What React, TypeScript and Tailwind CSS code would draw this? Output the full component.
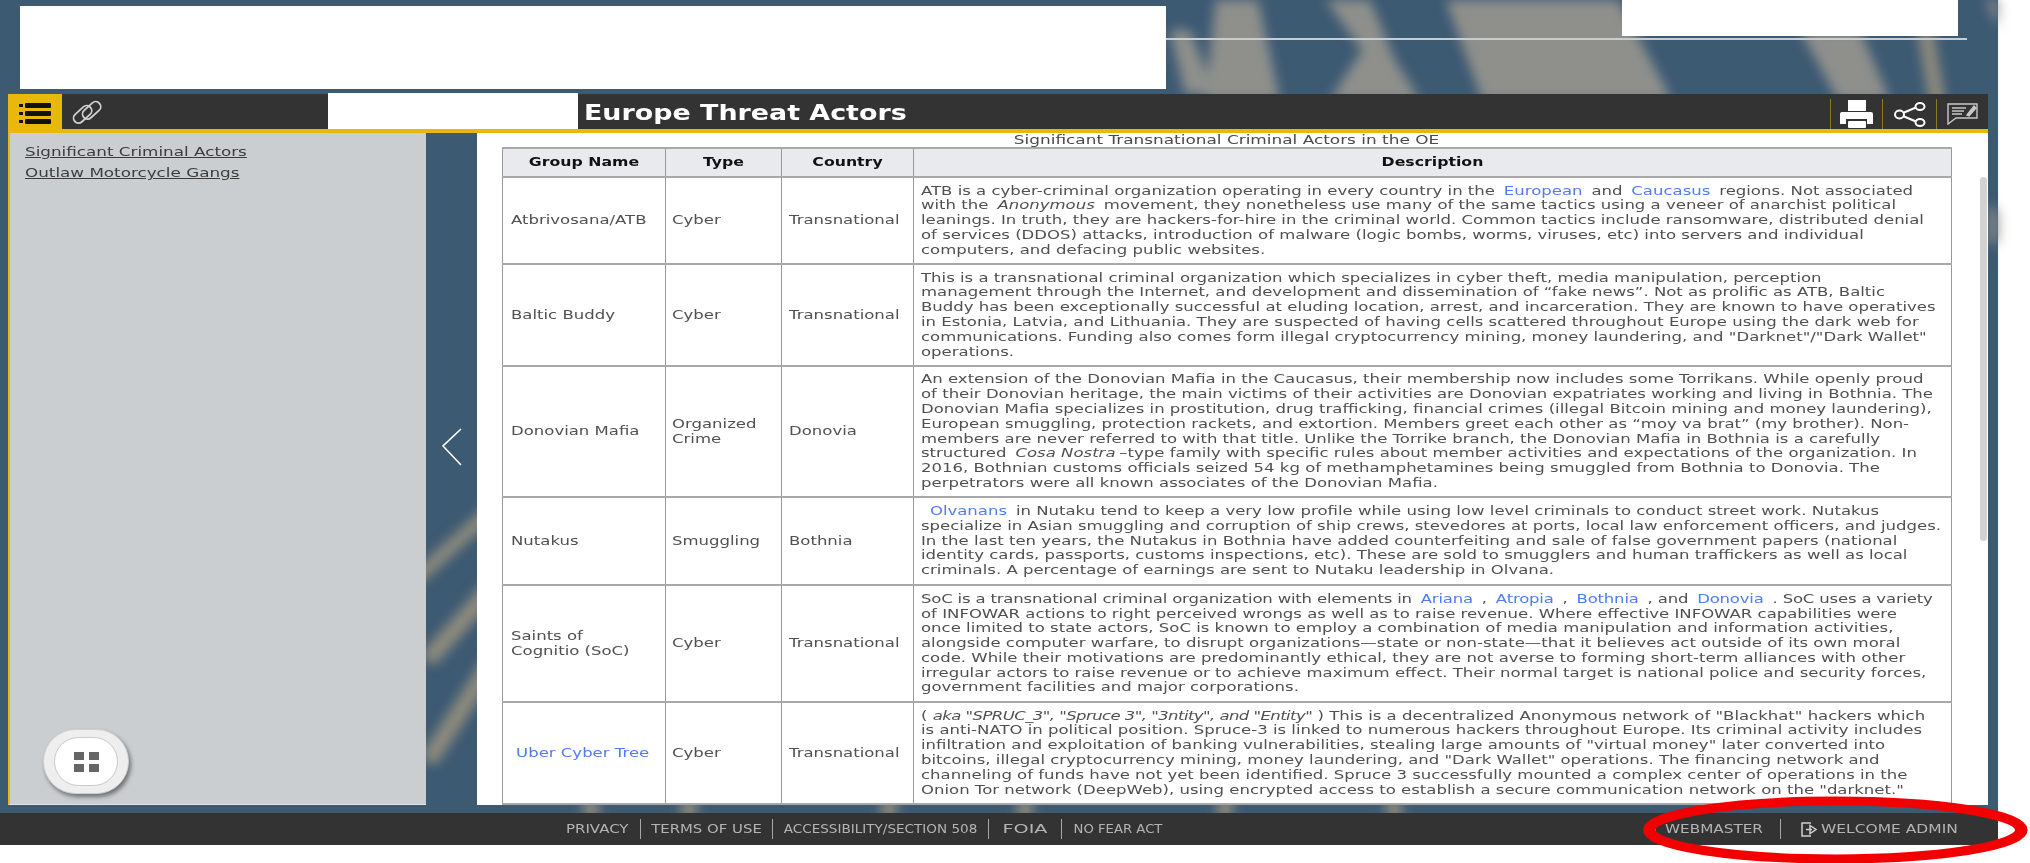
import type { ReactNode } from 'react';

// the capture is stretched sideways, so text gets a horizontal scale
const stretched = 'block whitespace-nowrap origin-left scale-x-[1.27]';

const A = ({ children }: { children: ReactNode }) => (
  <span className="text-[#4f7cf0] mx-[7px]">{children}</span>
);

type Row = {
  name: ReactNode;
  type: ReactNode;
  country: string;
  height: string;
  lines: ReactNode[];
};

const rows: Row[] = [
  {
    name: 'Atbrivosana/ATB',
    type: 'Cyber',
    country: 'Transnational',
    height: 'h-[87px]',
    lines: [
      <>ATB is a cyber-criminal organization operating in every country in the<A>European</A>and<A>Caucasus</A>regions. Not associated</>,
      <>with the <i className="mx-[3px]">Anonymous</i> movement, they nonetheless use many of the same tactics using a veneer of anarchist political</>,
      'leanings. In truth, they are hackers-for-hire in the criminal world. Common tactics include ransomware, distributed denial',
      'of services (DDOS) attacks, introduction of malware (logic bombs, worms, viruses, etc) into servers and individual',
      'computers, and defacing public websites.',
    ],
  },
  {
    name: 'Baltic Buddy',
    type: 'Cyber',
    country: 'Transnational',
    height: 'h-[102px]',
    lines: [
      'This is a transnational criminal organization which specializes in cyber theft, media manipulation, perception',
      'management through the Internet, and development and dissemination of “fake news”. Not as prolific as ATB, Baltic',
      'Buddy has been exceptionally successful at eluding location, arrest, and incarceration. They are known to have operatives',
      'in Estonia, Latvia, and Lithuania. They are suspected of having cells scattered throughout Europe using the dark web for',
      'communications. Funding also comes form illegal cryptocurrency mining, money laundering, and "Darknet"/"Dark Wallet"',
      'operations.',
    ],
  },
  {
    name: 'Donovian Mafia',
    type: <>Organized<br />Crime</>,
    country: 'Donovia',
    height: 'h-[131px]',
    lines: [
      'An extension of the Donovian Mafia in the Caucasus, their membership now includes some Torrikans. While openly proud',
      'of their Donovian heritage, the main victims of their activities are Donovian expatriates working and living in Bothnia. The',
      'Donovian Mafia specializes in prostitution, drug trafficking, financial crimes (illegal Bitcoin mining and money laundering),',
      'European smuggling, protection rackets, and extortion. Members greet each other as “moy va brat” (my brother). Non-',
      'members are never referred to with that title. Unlike the Torrike branch, the Donovian Mafia in Bothnia is a carefully',
      <>structured <i className="mx-[3px]">Cosa Nostra</i>–type family with specific rules about member activities and expectations of the organization. In</>,
      '2016, Bothnian customs officials seized 54 kg of methamphetamines being smuggled from Bothnia to Donovia. The',
      'perpetrators were all known associates of the Donovian Mafia.',
    ],
  },
  {
    name: 'Nutakus',
    type: 'Smuggling',
    country: 'Bothnia',
    height: 'h-[88px]',
    lines: [
      <><A>Olvanans</A>in Nutaku tend to keep a very low profile while using low level criminals to conduct street work. Nutakus</>,
      'specialize in Asian smuggling and corruption of ship crews, stevedores at ports, local law enforcement officers, and judges.',
      'In the last ten years, the Nutakus in Bothnia have added counterfeiting and sale of false government papers (national',
      'identity cards, passports, customs inspections, etc). These are sold to smugglers and human traffickers as well as local',
      'criminals. A percentage of earnings are sent to Nutaku leadership in Olvana.',
    ],
  },
  {
    name: <>Saints of<br />Cognitio (SoC)</>,
    type: 'Cyber',
    country: 'Transnational',
    height: 'h-[117px]',
    lines: [
      <span className="tracking-[-0.15px]">SoC is a transnational criminal organization with elements in<A>Ariana</A>,<A>Atropia</A>,<A>Bothnia</A>, and<A>Donovia</A>. SoC uses a variety</span>,
      'of INFOWAR actions to right perceived wrongs as well as to raise revenue. Where effective INFOWAR capabilities were',
      'once limited to state actors, SoC is known to employ a combination of media manipulation and information activities,',
      'alongside computer warfare, to disrupt organizations—state or non-state—that it believes act outside of its own moral',
      'code. While their motivations are predominantly ethical, they are not averse to forming short-term alliances with other',
      'irregular actors to raise revenue or to achieve maximum effect. Their normal target is national police and security forces,',
      'government facilities and major corporations.',
    ],
  },
  {
    name: <span className="text-[#4f7cf0] ml-[4px]">Uber Cyber Tree</span>,
    type: 'Cyber',
    country: 'Transnational',
    height: 'h-[102px]',
    lines: [
      <>( <i className="tracking-[-0.45px]">aka "SPRUC_3", "Spruce 3", "3ntity", and "Entity"</i> ) This is a decentralized Anonymous network of "Blackhat" hackers which</>,
      'is anti-NATO in political position. Spruce-3 is linked to numerous hackers throughout Europe. Its criminal activity includes',
      'infiltration and exploitation of banking vulnerabilities, stealing large amounts of "virtual money" later converted into',
      'bitcoins, illegal cryptocurrency mining, money laundering, and "Dark Wallet" operations. The financing network and',
      'channeling of funds have not yet been identified. Spruce 3 successfully mounted a complex center of operations in the',
      'Onion Tor network (DeepWeb), using encrypted access to establish a secure communication network on the "darknet."',
    ],
  },
];

function Backdrop() {
  return (
    <svg className="absolute inset-0 blur-[6px]" width="1998" height="845" fill="none">
      <g fill="#8f908c">
        <path d="M1170 30 L1190 30 L1215 94 L1185 94 Z" />
        <path d="M1216 -5 L1257 -5 L1280 100 L1205 100 Z" />
        <path d="M1322 -5 L1368 -5 L1395 60 L1420 100 L1330 100 L1362 50 Z" />
        <path d="M1444 -5 L1515 -5 L1620 100 L1482 100 Z" />
        <path d="M1515 -5 L1616 -5 L1672 100 L1592 100 Z" />
        <path d="M1800 30 L1860 30 L1890 100 L1838 100 Z" />
        <path d="M1984 -5 L1998 -5 L1998 28 Z" />
        <path d="M1989 203 L1998 212 L1998 240 L1989 247 Z" />
      </g>
      <g stroke="#8e8b7d" strokeLinecap="round">
        <path d="M1926 35 L1937 100" strokeWidth="16" />
        <path d="M490 512 L420 575" strokeWidth="14" />
        <path d="M490 590 L432 655" strokeWidth="18" />
        <path d="M490 665 L432 755" strokeWidth="18" />
        <path d="M591 806 L591 812 M689 806 L689 812 M889 806 L889 812 M1025 806 L1025 812 M1225 806 L1225 812 M1394 806 L1394 812" strokeWidth="16" />
      </g>
    </svg>
  );
}

function ListIcon() {
  return (
    <svg width="32" height="22" viewBox="0 0 32 22" fill="#111">
      <rect x="0" y="1" width="4" height="3" />
      <rect x="0" y="9" width="4" height="3" />
      <rect x="0" y="17" width="4" height="3" />
      <rect x="6" y="0" width="26" height="5" rx="1" />
      <rect x="6" y="8" width="26" height="5" rx="1" />
      <rect x="6" y="16" width="26" height="5" rx="1" />
    </svg>
  );
}

function ChainIcon() {
  return (
    <svg width="32" height="26" viewBox="0 0 32 26" fill="none" stroke="#d0d0d0" strokeWidth="1.8">
      <rect x="15" y="1" width="10" height="21" rx="5" transform="rotate(48 20 11)" />
      <rect x="6" y="5" width="10" height="21" rx="5" transform="rotate(48 11 15)" />
    </svg>
  );
}

function PrintIcon() {
  return (
    <svg width="33" height="28" viewBox="0 0 33 28" fill="#fff">
      <rect x="8" y="0" width="18" height="11" />
      <path d="M2 12 H31 Q33 12 33 14 V24 H27 V19 H6 V24 H0 V14 Q0 12 2 12 Z" />
      <rect x="8" y="21" width="18" height="7" rx="1" />
    </svg>
  );
}

function ShareIcon() {
  return (
    <svg width="32" height="25" viewBox="0 0 32 25" fill="none" stroke="#fff" strokeWidth="2">
      <ellipse cx="5.5" cy="12.5" rx="4.5" ry="4" />
      <ellipse cx="26" cy="4.5" rx="4.5" ry="3.5" />
      <ellipse cx="26" cy="20.5" rx="4.5" ry="3.5" />
      <path d="M10 10.5 L22 5.5 M10 14.5 L22 19.5" />
    </svg>
  );
}

function CommentIcon() {
  return (
    <svg width="31" height="22" viewBox="0 0 31 22" fill="none" stroke="#c8c8c8" strokeWidth="1.4">
      <path d="M1 1 H30 V15 H9 L1 21 Z" />
      <path d="M5 5 H19 M5 8 H17 M5 11 H15" />
      <path d="M20 12 L27 3 L29 5 L22 13 Z" fill="#c8c8c8" />
    </svg>
  );
}

const Sep = () => <span className="w-px h-[20px] bg-[#a8a8a8]" />;

const cell = 'border-x border-y-2 border-x-[#999999] border-y-[#a8a8a8]';

export default function App() {
  return (
    <div className="relative w-[2030px] h-[863px] overflow-hidden bg-white font-['DejaVu_Sans',sans-serif] blur-[0.4px]">
      <div className="relative w-[1998px] h-[845px] bg-[#3d5a73]">
        <Backdrop />
        <div className="relative flex flex-col h-full">
          {/* top banner */}
          <div className="flex h-[94px]">
            <div className="ml-[20px] mt-[6px] w-[1146px] h-[83px] bg-white" />
            <div className="flex justify-end w-[801px] h-[40px] border-b-2 border-[#c9ccd0]">
              <div className="mr-[9px] w-[336px] h-[36px] bg-white" />
            </div>
          </div>

          {/* toolbar */}
          <div className="flex items-stretch ml-[8px] w-[1980px] h-[39px] bg-[#333333] border-b-4 border-[#e8b90c]">
            <div className="flex items-center justify-center w-[54px] h-[39px] bg-[#e8b90c]">
              <ListIcon />
            </div>
            <div className="flex items-center justify-center w-[52px]">
              <ChainIcon />
            </div>
            <div className="ml-[214px] -mt-px w-[250px] h-[36px] bg-white" />
            <div className="ml-[6px] text-[21px] leading-[39px] font-bold text-white whitespace-nowrap origin-left scale-x-[1.28]">Europe Threat Actors</div>
            <div className="ml-auto flex items-center h-[30px] mt-[5px]">
              <div className="flex items-center justify-center w-[52px] h-full border-l border-[#8d7a20]">
                <PrintIcon />
              </div>
              <div className="flex items-center justify-center w-[54px] h-full border-l border-[#8d7a20]">
                <ShareIcon />
              </div>
              <div className="flex items-center justify-center w-[52px] h-full border-l border-[#8d7a20]">
                <CommentIcon />
              </div>
            </div>
          </div>

          {/* body */}
          <div className="flex ml-[8px] w-[1980px] h-[672px]">
            <div className="relative w-[418px] bg-[#cbced1] border-l-2 border-b border-l-[#e8b90c] border-b-[#e2e3e5] pl-[15px] pt-[8px] text-[13px] leading-[21px] text-[#3c3c3c]">
              <div className="underline whitespace-nowrap origin-left scale-x-[1.29]">Significant Criminal Actors</div>
              <div className="underline whitespace-nowrap origin-left scale-x-[1.29]">Outlaw Motorcycle Gangs</div>
              <button className="absolute left-[33px] bottom-[10px] flex items-center justify-center w-[86px] h-[65px] rounded-full bg-[#eeeeee] border border-[#d0d0d0] shadow-[2px_3px_4px_rgba(0,0,0,0.45)]">
                <span className="flex items-center justify-center w-[64px] h-[49px] rounded-full bg-white border border-[#c8c8c8]">
                  <span className="grid grid-cols-2 gap-x-[5px] gap-y-[4px]">
                    <span className="w-[10px] h-[8px] bg-[#666]" />
                    <span className="w-[10px] h-[8px] bg-[#666]" />
                    <span className="w-[10px] h-[8px] bg-[#666]" />
                    <span className="w-[10px] h-[8px] bg-[#666]" />
                  </span>
                </span>
              </button>
            </div>

            <div className="flex items-start justify-center w-[51px] pt-[295px]">
              <svg width="20" height="38" viewBox="0 0 20 38" fill="none" stroke="#fff" strokeWidth="1.6">
                <path d="M19 1 L1 18 L19 37" />
              </svg>
            </div>

            <div className="relative w-[1511px] bg-white overflow-hidden pl-[25px]">
              <div className="w-[1449px] h-[14px] text-center text-[13px] leading-[13px] text-[#4a4a4a] whitespace-nowrap scale-x-[1.3]">
                Significant Transnational Criminal Actors in the OE
              </div>
              <table className="table-fixed border-collapse w-[1449px] text-[13px] leading-[14.8px] text-[#505050]">
                <colgroup>
                  <col className="w-[163px]" />
                  <col className="w-[116px]" />
                  <col className="w-[132px]" />
                  <col className="w-[1038px]" />
                </colgroup>
                <thead>
                  <tr className="h-[29px] bg-[#e9eaed] text-[#111]">
                    {['Group Name', 'Type', 'Country', 'Description'].map(h => (
                      <th key={h} className={`${cell} font-bold`}>
                        <span className="block scale-x-[1.21]">{h}</span>
                      </th>
                    ))}
                  </tr>
                </thead>
                <tbody>
                  {rows.map((row, i) => (
                    <tr key={i} className={row.height}>
                      <td className={`${cell} pl-[8px]`}><span className={stretched}>{row.name}</span></td>
                      <td className={`${cell} pl-[6px]`}><span className={stretched}>{row.type}</span></td>
                      <td className={`${cell} pl-[7px]`}><span className={stretched}>{row.country}</span></td>
                      <td className={`${cell} pl-[7px]`}>
                        {row.lines.map((line, j) => (
                          <span key={j} className={stretched}>{line}</span>
                        ))}
                      </td>
                    </tr>
                  ))}
                </tbody>
              </table>
              <div className="absolute right-[1px] top-[44px] w-[7px] h-[364px] rounded-sm bg-[#d2d2d2]" />
            </div>
          </div>

          {/* footer */}
          <div className="mt-[8px] flex items-center w-full h-[32px] bg-[#333333] pl-[562px] text-[12px] text-[#b4b4b4]">
            <span className="w-[78px] pr-[6px] text-center whitespace-nowrap scale-x-[1.25]">PRIVACY</span>
            <Sep />
            <span className="w-[131px] text-center whitespace-nowrap scale-x-[1.24]">TERMS OF USE</span>
            <Sep />
            <span className="w-[215px] text-center whitespace-nowrap scale-x-[1.13]">ACCESSIBILITY/SECTION 508</span>
            <Sep />
            <span className="w-[72px] text-center whitespace-nowrap scale-x-[1.6]">FOIA</span>
            <Sep />
            <span className="w-[112px] text-center whitespace-nowrap scale-x-[1.1]">NO FEAR ACT</span>
            <span className="ml-[475px] mr-[9px] w-[7px] h-[7px] rounded-full bg-white" />
            <span className="w-[115px] whitespace-nowrap origin-left scale-x-[1.27]">WEBMASTER</span>
            <Sep />
            <svg className="ml-[20px] mr-[4px]" width="16" height="15" viewBox="0 0 16 15" fill="none" stroke="#cfcfcf" strokeWidth="1.5">
              <path d="M10 1 H1 V14 H10" />
              <path d="M5 7.5 H11 M9 3.5 L15 7.5 L9 11.5 Z" />
            </svg>
            <span className="whitespace-nowrap origin-left scale-x-[1.29]">WELCOME ADMIN</span>
          </div>
        </div>
      </div>

      {/* red markup over the footer */}
      <svg className="absolute left-[1630px] top-[790px]" width="400" height="73" viewBox="0 0 286 73" preserveAspectRatio="none" fill="none" stroke="#f20000" strokeWidth="9">
        <ellipse cx="146.8" cy="40" rx="133" ry="29" />
      </svg>
    </div>
  );
}
